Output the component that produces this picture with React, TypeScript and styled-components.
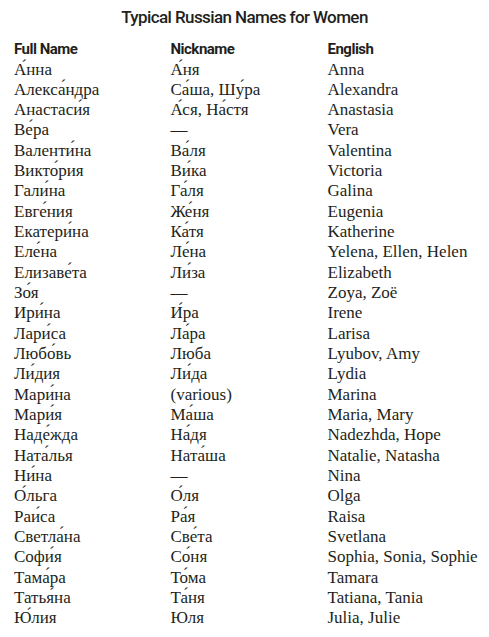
import React from "react";
import styled, { createGlobalStyle } from "styled-components";

const Global = createGlobalStyle`
  html, body { margin: 0; padding: 0; background: #fff; }
  body { width: 489px; height: 637px; overflow: hidden; }
`;

const Page = styled.div`
  width: 489px;
  height: 637px;
  box-sizing: border-box;
  padding: 6px 0 0 14px;
  background: #fff;
  color: #231f20;
`;

const Title = styled.h1`
  margin: 0 0 12px -14px;
  text-align: center;
  font-family: Roboto, "Liberation Sans", sans-serif;
  font-weight: 500;
  font-size: 17px;
  line-height: 22px;
  letter-spacing: -0.6px;
  height: 22px;
`;

const Table = styled.div`
  display: grid;
  grid-template-columns: 156.5px 157px 1fr;
  font-family: "Liberation Serif", "Times New Roman", serif;
`;

const Head = styled.div`
  font-family: Roboto, "Liberation Sans", sans-serif;
  font-weight: 700;
  font-size: 15px;
  line-height: 19.5px;
  height: 19.5px;
  letter-spacing: -0.5px;
`;

const Cell = styled.div`
  font-family: "Liberation Serif", "Times New Roman", serif;
  font-size: 17px;
  line-height: 20.33px;
  height: 20.33px;
  white-space: nowrap;
`;

const a = "\u0301";
const rows: [string, string, string][] = [
  [`А${a}нна`, `А${a}ня`, "Anna"],
  [`Алекса${a}ндра`, `Са${a}ша, Шу${a}ра`, "Alexandra"],
  [`Анастаси${a}я`, `А${a}ся, На${a}стя`, "Anastasia"],
  [`Ве${a}ра`, "—", "Vera"],
  [`Валенти${a}на`, `Ва${a}ля`, "Valentina"],
  [`Викто${a}рия`, `Ви${a}ка`, "Victoria"],
  [`Гали${a}на`, `Га${a}ля`, "Galina"],
  [`Евге${a}ния`, `Же${a}ня`, "Eugenia"],
  [`Екатери${a}на`, `Ка${a}тя`, "Katherine"],
  [`Еле${a}на`, `Ле${a}на`, "Yelena, Ellen, Helen"],
  [`Елизаве${a}та`, `Ли${a}за`, "Elizabeth"],
  [`Зо${a}я`, "—", "Zoya, Zoë"],
  [`Ири${a}на`, `И${a}ра`, "Irene"],
  [`Лари${a}са`, `Ла${a}ра`, "Larisa"],
  [`Любо${a}вь`, "Люба", "Lyubov, Amy"],
  [`Ли${a}дия`, `Ли${a}да`, "Lydia"],
  [`Мари${a}на`, "(various)", "Marina"],
  [`Мари${a}я`, `Ма${a}ша`, "Maria, Mary"],
  [`Наде${a}жда`, `На${a}дя`, "Nadezhda, Hope"],
  [`Ната${a}лья`, `Ната${a}ша`, "Natalie, Natasha"],
  [`Ни${a}на`, "—", "Nina"],
  [`О${a}льга`, `О${a}ля`, "Olga"],
  [`Раи${a}са`, `Ра${a}я`, "Raisa"],
  [`Светла${a}на`, `Све${a}та`, "Svetlana"],
  [`Софи${a}я`, `Со${a}ня`, "Sophia, Sonia, Sophie"],
  [`Тама${a}ра`, `То${a}ма`, "Tamara"],
  [`Татья${a}на`, `Та${a}ня`, "Tatiana, Tania"],
  [`Ю${a}лия`, "Юля", "Julia, Julie"],
];

export default function App() {
  return (
    <>
      <Global />
      <Page>
        <Title>Typical Russian Names for Women</Title>
        <Table>
          <Head>Full Name</Head>
          <Head>Nickname</Head>
          <Head>English</Head>
          {rows.map((r, i) => (
            <React.Fragment key={i}>
              <Cell>{r[0]}</Cell>
              <Cell>{r[1]}</Cell>
              <Cell>{r[2]}</Cell>
            </React.Fragment>
          ))}
        </Table>
      </Page>
    </>
  );
}
